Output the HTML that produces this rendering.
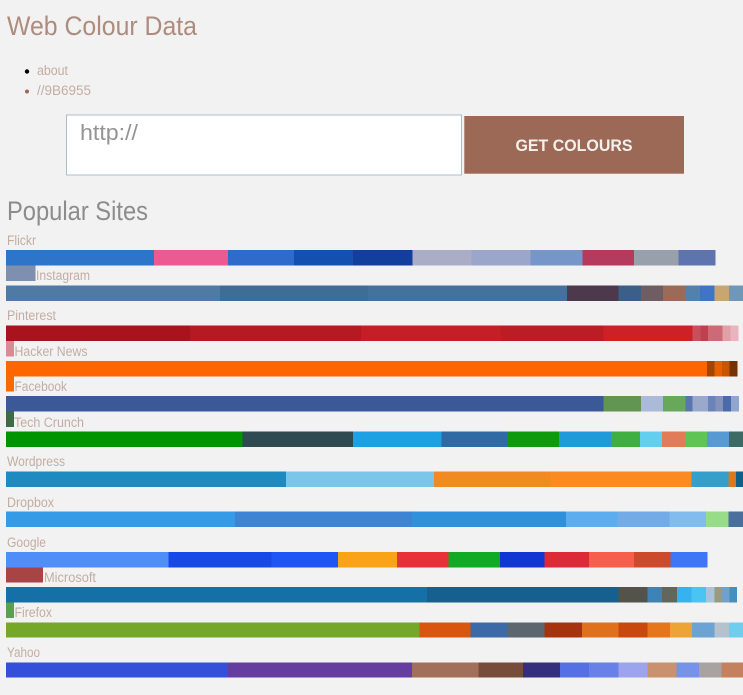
<!DOCTYPE html>
<html lang="en">
<head>
<meta charset="utf-8">
<title>Web Colour Data</title>
<style>
html,body{margin:0;padding:0;background:#f2f2f2;width:743px;height:695px;overflow:hidden}
svg{display:block}
.bar rect{height:15.4px;shape-rendering:crispEdges}
text{font-family:"Liberation Sans",sans-serif}
.l{font-size:13.5px;fill:#c3ada2}
</style>
</head>
<body>
<svg width="743" height="695" viewBox="0 0 743 695" xmlns="http://www.w3.org/2000/svg">
<rect width="743" height="695" fill="#f2f2f2"/>

<text x="7" y="35" font-size="27" fill="#ad8c7d" textLength="190" lengthAdjust="spacingAndGlyphs">Web Colour Data</text>

<circle cx="27" cy="71.5" r="2.2" fill="#000"/>
<text x="37" y="75" class="l" font-size="13" textLength="31" lengthAdjust="spacingAndGlyphs">about</text>
<circle cx="27" cy="91.5" r="2" fill="#9b6955"/>
<text x="37" y="95" class="l" font-size="13" textLength="54" lengthAdjust="spacingAndGlyphs">//9B6955</text>

<rect x="66.5" y="115" width="395" height="60" fill="#fff" stroke="#aebfcc" stroke-width="1"/>
<text x="80" y="140" font-size="22" fill="#949494" textLength="58" lengthAdjust="spacingAndGlyphs">http://</text>
<rect x="464.3" y="116" width="219.7" height="57.7" fill="#9b6955"/>
<text x="515.5" y="151" font-size="17" font-weight="bold" fill="#f5f0ec" textLength="117" lengthAdjust="spacingAndGlyphs">GET COLOURS</text>

<text x="7" y="220" font-size="27" fill="#8c8c8c" textLength="141" lengthAdjust="spacingAndGlyphs">Popular Sites</text>

<text x="7" y="245" class="l" textLength="29" lengthAdjust="spacingAndGlyphs">Flickr</text>
<g class="bar" transform="translate(0,250)">
<rect x="6" width="148" fill="#2e74c8"/><rect x="154" width="74" fill="#ec5a93"/><rect x="228" width="66" fill="#2f6bcb"/><rect x="294" width="59" fill="#1450b0"/><rect x="353" width="59.3" fill="#123f9c"/><rect x="412.3" width="59.4" fill="#abacc5"/><rect x="471.7" width="59" fill="#9ba6ca"/><rect x="530.7" width="51.6" fill="#7695c9"/><rect x="582.3" width="51.7" fill="#b43b5e"/><rect x="634" width="44.3" fill="#98a0ac"/><rect x="678.3" width="37" fill="#5e74ae"/>
</g>

<g class="bar" transform="translate(0,265.4)"><rect x="6" width="29.5" fill="#7e8fb0"/></g>
<text x="36" y="280" class="l" textLength="54" lengthAdjust="spacingAndGlyphs">Instagram</text>
<g class="bar" transform="translate(0,285.4)">
<rect x="6" width="214" fill="#4e7aa3"/><rect x="220" width="148" fill="#3e6d96"/><rect x="368" width="199" fill="#44729c"/><rect x="567" width="51.7" fill="#4c394c"/><rect x="618.7" width="22.3" fill="#3c5f87"/><rect x="641" width="22" fill="#6e5d62"/><rect x="663" width="22.3" fill="#9b6b58"/><rect x="685.3" width="14.7" fill="#5480ac"/><rect x="700" width="14.7" fill="#4074c4"/><rect x="714.7" width="14.3" fill="#c8a673"/><rect x="729" width="14" fill="#7097b6"/>
</g>

<text x="7" y="320" class="l" textLength="49" lengthAdjust="spacingAndGlyphs">Pinterest</text>
<g class="bar" transform="translate(0,325.7)">
<rect x="6" width="184" fill="#a8131e"/><rect x="190" width="171" fill="#b51a23"/><rect x="361" width="139.7" fill="#c61e26"/><rect x="500.7" width="103" fill="#bc1c24"/><rect x="603.7" width="88.6" fill="#ce2127"/><rect x="692.3" width="8" fill="#c8505c"/><rect x="700.3" width="7.7" fill="#c04050"/><rect x="708" width="14.7" fill="#cc6b76"/><rect x="722.7" width="7.6" fill="#e0a0a8"/><rect x="730.3" width="8.4" fill="#e8b4be"/>
</g>

<g class="bar" transform="translate(0,341)"><rect x="6" width="8" fill="#da8a96"/></g>
<text x="14.5" y="356" class="l" textLength="73" lengthAdjust="spacingAndGlyphs">Hacker News</text>
<g class="bar" transform="translate(0,361)">
<rect x="6" width="701" fill="#f60"/><rect x="707" width="7.7" fill="#a24500"/><rect x="714.7" width="7.3" fill="#e56100"/><rect x="722" width="7.7" fill="#c95500"/><rect x="729.7" width="8" fill="#743300"/>
</g>

<g class="bar" transform="translate(0,376.3)"><rect x="6" width="8" fill="#f66a00"/></g>
<text x="14.5" y="391" class="l" textLength="52.5" lengthAdjust="spacingAndGlyphs">Facebook</text>
<g class="bar" transform="translate(0,396.2)">
<rect x="6" width="597.7" fill="#3b5998"/><rect x="603.7" width="37.3" fill="#619551"/><rect x="641" width="22" fill="#abbad8"/><rect x="663" width="22.3" fill="#68a85a"/><rect x="685.3" width="7.4" fill="#5a76b0"/><rect x="692.7" width="15.3" fill="#9aa8cc"/><rect x="708" width="7.3" fill="#6c83ba"/><rect x="715.3" width="7.7" fill="#8391bc"/><rect x="723" width="8" fill="#4a6aa8"/><rect x="731" width="8" fill="#90a6d0"/>
</g>

<g class="bar" transform="translate(0,411.6)"><rect x="6" width="8" fill="#3e6b46"/></g>
<text x="14" y="427" class="l" textLength="70" lengthAdjust="spacingAndGlyphs">Tech Crunch</text>
<g class="bar" transform="translate(0,431.7)">
<rect x="6" width="236.3" fill="#009400"/><rect x="242.3" width="110.7" fill="#2f4a50"/><rect x="353" width="88.3" fill="#1f9fe4"/><rect x="441.3" width="66.4" fill="#2f6aa4"/><rect x="507.7" width="51.3" fill="#0d9b0d"/><rect x="559" width="52" fill="#209adb"/><rect x="611" width="29" fill="#3faf42"/><rect x="640" width="22" fill="#63cfee"/><rect x="662" width="23" fill="#e27b58"/><rect x="685" width="22" fill="#5ec454"/><rect x="707" width="22" fill="#5799d2"/><rect x="729" width="14" fill="#3e6a66"/>
</g>

<text x="7" y="466" class="l" textLength="58" lengthAdjust="spacingAndGlyphs">Wordpress</text>
<g class="bar" transform="translate(0,471.7)">
<rect x="6" width="280" fill="#1e8bc0"/><rect x="286" width="148" fill="#7ac6e8"/><rect x="434" width="116" fill="#f28a22"/><rect x="550" width="141.7" fill="#fc8a22"/><rect x="691.7" width="36.6" fill="#349fcb"/><rect x="728.3" width="7.7" fill="#d87a20"/><rect x="736" width="7" fill="#0e5f8a"/>
</g>

<text x="7" y="507" class="l" textLength="47" lengthAdjust="spacingAndGlyphs">Dropbox</text>
<g class="bar" transform="translate(0,511.7)">
<rect x="6" width="229" fill="#339be8"/><rect x="235" width="177" fill="#3d85d4"/><rect x="412" width="154" fill="#2f90dc"/><rect x="566" width="51.7" fill="#5badf0"/><rect x="617.7" width="51.6" fill="#72abe8"/><rect x="669.3" width="36.7" fill="#82bbee"/><rect x="706" width="22.3" fill="#98dc8a"/><rect x="728.3" width="14.7" fill="#4a6f9c"/>
</g>

<text x="7" y="547" class="l" textLength="39" lengthAdjust="spacingAndGlyphs">Google</text>
<g class="bar" transform="translate(0,552)">
<rect x="6" width="162.7" fill="#4f8ef9"/><rect x="168.7" width="103" fill="#1749e6"/><rect x="271.7" width="66.3" fill="#1e56f5"/><rect x="338" width="59" fill="#f9a416"/><rect x="397" width="51.3" fill="#e92f38"/><rect x="448.3" width="51.7" fill="#0fab24"/><rect x="500" width="44.7" fill="#1037d4"/><rect x="544.7" width="44.3" fill="#dc2a38"/><rect x="589" width="45" fill="#f55f4c"/><rect x="634" width="36.7" fill="#cc4b2c"/><rect x="670.7" width="37" fill="#3e76f8"/>
</g>

<g class="bar" transform="translate(0,567.3)"><rect x="6" width="37" fill="#a84444"/></g>
<text x="44" y="582" class="l" textLength="52" lengthAdjust="spacingAndGlyphs">Microsoft</text>
<g class="bar" transform="translate(0,587)">
<rect x="6" width="421" fill="#1570a8"/><rect x="427" width="191.7" fill="#15608f"/><rect x="618.7" width="29" fill="#54534b"/><rect x="647.7" width="14.3" fill="#3d83b8"/><rect x="662" width="15" fill="#62675c"/><rect x="677" width="14.7" fill="#36b2ee"/><rect x="691.7" width="14.3" fill="#4ac4f2"/><rect x="706" width="8.3" fill="#a8c4d6"/><rect x="714.3" width="7.7" fill="#9a9a80"/><rect x="722" width="7.7" fill="#6fa2c8"/><rect x="729.7" width="7.3" fill="#438fc0"/>
</g>

<g class="bar" transform="translate(0,602.7)"><rect x="6" width="8" fill="#5e9e50"/></g>
<text x="14.5" y="617" class="l" textLength="37.5" lengthAdjust="spacingAndGlyphs">Firefox</text>
<g class="bar" transform="translate(0,622.3)">
<rect x="6" width="413.3" fill="#75a728"/><rect x="419.3" width="51.4" fill="#d9560e"/><rect x="470.7" width="37" fill="#3c69a8"/><rect x="507.7" width="37" fill="#5c666f"/><rect x="544.7" width="37.3" fill="#a5340e"/><rect x="582" width="36.7" fill="#df701c"/><rect x="618.7" width="29" fill="#c8480e"/><rect x="647.7" width="22.3" fill="#e5761a"/><rect x="670" width="22" fill="#eea336"/><rect x="692" width="22.7" fill="#6da3d2"/><rect x="714.7" width="14.3" fill="#b4c2ce"/><rect x="729" width="14" fill="#70cdee"/>
</g>

<text x="7" y="657" class="l" textLength="33" lengthAdjust="spacingAndGlyphs">Yahoo</text>
<g class="bar" transform="translate(0,662.3)">
<rect x="6" width="222" fill="#344fd9"/><rect x="228" width="184" fill="#653c9f"/><rect x="412" width="66.3" fill="#a2705a"/><rect x="478.3" width="44.7" fill="#784c3a"/><rect x="523" width="37" fill="#342f7c"/><rect x="560" width="29" fill="#5570e4"/><rect x="589" width="29.3" fill="#6880e8"/><rect x="618.3" width="29.4" fill="#9ba4ec"/><rect x="647.7" width="29" fill="#c9926f"/><rect x="676.7" width="22.3" fill="#7693e8"/><rect x="699" width="22.3" fill="#a8a2a2"/><rect x="721.3" width="21.7" fill="#c5805e"/>
</g>
</svg>
</body>
</html>
